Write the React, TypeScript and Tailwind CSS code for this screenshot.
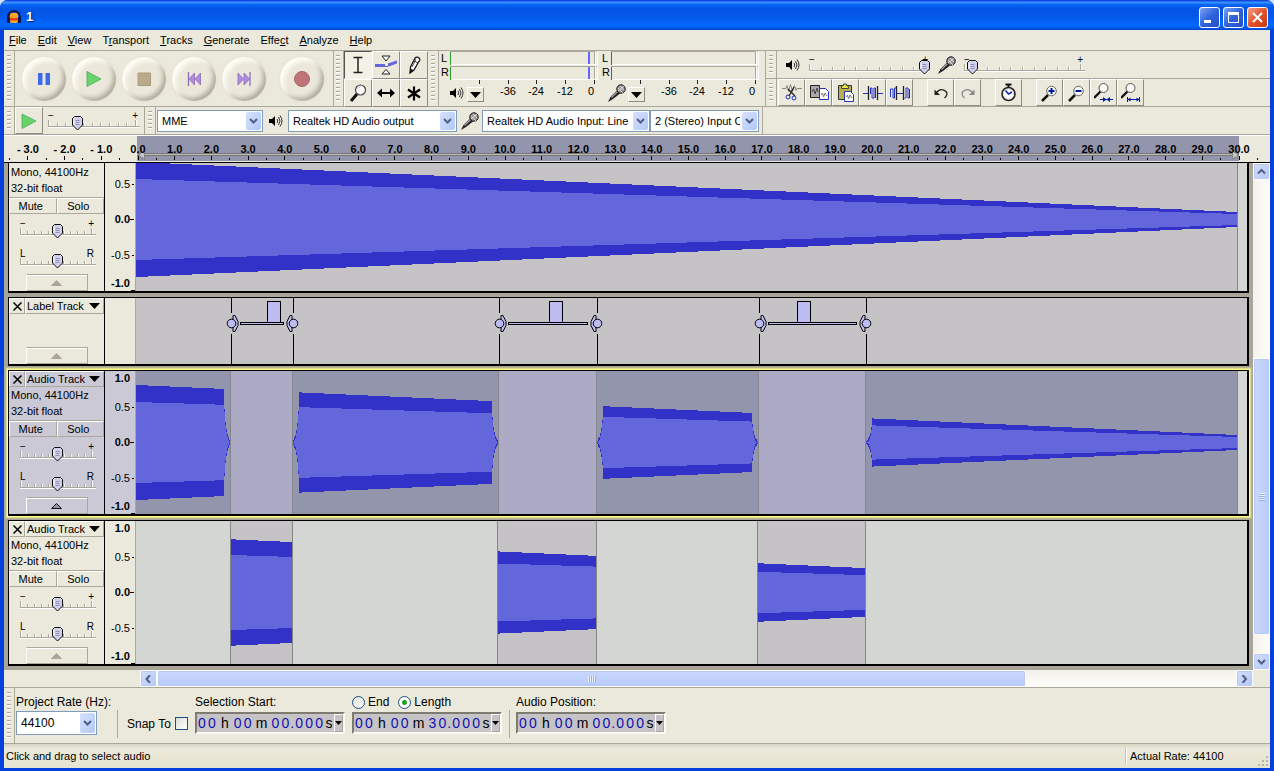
import { useState, type ReactNode } from 'react'

const MENUS = [
  ['', 'F', 'ile'],
  ['', 'E', 'dit'],
  ['', 'V', 'iew'],
  ['T', 'r', 'ansport'],
  ['', 'T', 'racks'],
  ['', 'G', 'enerate'],
  ['Effe', 'c', 't'],
  ['', 'A', 'nalyze'],
  ['', 'H', 'elp'],
]

// Timeline geometry: one second of audio is 36.7 units, the tracks are 1111 units wide
const SECOND = 36.7
const CLIP_END = 1101
const WAVE_W = 1111
const WAVE_H = 143
const MID = 71.5
const RULER_W = 1266

const FADE = [0.04, 0.1, 0.15, 0.24, 0.38, 0.62]

interface Clip {
  start: number
  end: number
  fadeIn?: boolean
  fadeOut?: boolean
}

const FULL: Clip[] = [{ start: 0, end: CLIP_END }]
const KEPT: Clip[] = [
  { start: 0, end: 94, fadeOut: true },
  { start: 157, end: 362, fadeIn: true, fadeOut: true },
  { start: 461, end: 622, fadeIn: true, fadeOut: true },
  { start: 730, end: CLIP_END, fadeIn: true },
]
const CUT: Clip[] = [
  { start: 95, end: 156 },
  { start: 362, end: 460 },
  { start: 622, end: 729 },
]

const LABELS = [
  { from: 95, to: 157, box: 131 },
  { from: 363, to: 461, box: 413 },
  { from: 623, to: 730, box: 661 },
]

function envelope(clip: Clip, peak: number, tail: number, inset: number) {
  const top: string[] = []
  const bottom: string[] = []
  for (let x = clip.start; x < clip.end; x++) {
    const loud = 57 - (50 * x) / CLIP_END
    let h = peak - ((peak - tail) * x) / CLIP_END
    const left = x - clip.start
    const right = clip.end - 1 - x
    if (clip.fadeIn && left < FADE.length) h = Math.min(h, loud * FADE[left] - inset)
    if (clip.fadeOut && right < FADE.length) h = Math.min(h, loud * FADE[right] - inset)
    h = Math.max(0, Math.round(h)) + 0.5
    top.push(`${x},${MID - h} ${x + 1},${MID - h}`)
    bottom.unshift(`${x + 1},${MID + h} ${x},${MID + h}`)
  }
  return [...top, ...bottom].join(' ')
}

function Wave({ clips }: { clips: Clip[] }) {
  return (
    <>
      {clips.map((c) => (
        <g key={c.start}>
          <polygon points={envelope(c, 57, 7, 0)} fill="#3232c8" />
          <polygon points={envelope(c, 40, 5, 3)} fill="#6467dc" />
        </g>
      ))}
    </>
  )
}

function Canvas({ height, children, bg }: { height: number; children: ReactNode; bg: string }) {
  return (
    <svg
      className={`block min-w-0 flex-1 ${bg}`}
      viewBox={`0 0 ${WAVE_W} ${height}`}
      height={height}
      preserveAspectRatio="none"
      shapeRendering="crispEdges"
    >
      {children}
    </svg>
  )
}

function Grip() {
  return (
    <div className="flex w-[11px] shrink-0 justify-center border-r border-[#aca899] py-1">
      <div className="w-1 bg-[repeating-linear-gradient(to_bottom,#aca899_0_1px,#fff_1px_2px,transparent_2px_4px)]" />
    </div>
  )
}

interface SliderProps {
  label: string
  width: number
  initial: number
  ticks: number
  low?: string
  high?: string
}

function Slider({ label, width, initial, ticks, low = '−', high = '+' }: SliderProps) {
  const [value, setValue] = useState(initial)
  const usable = width - 3
  return (
    <label className="relative block h-5" style={{ width }}>
      <svg width={width} height="20" className="block overflow-visible" shapeRendering="crispEdges">
        {Array.from({ length: ticks }, (_, i) => {
          const x = Math.round((i * (usable - 2)) / (ticks - 1))
          const end = i === 0 || i === ticks - 1
          return (
            <g key={i}>
              <rect x={x} y={end ? 9 : 12} width="1" height={end ? 6 : 3} fill="#aca899" />
              <rect x={x + 1} y={end ? 9 : 12} width="1" height={end ? 6 : 3} fill="#fff" />
            </g>
          )
        })}
        <rect x="0" y="15" width={width} height="1" fill="#aca899" />
        <rect x="0" y="16" width={width} height="1" fill="#fff" />
        <text x="0" y="8" className="text-[10px]">{low}</text>
        <text x={width - 2} y="8" textAnchor="end" className="text-[10px]">{high}</text>
        <g transform={`translate(${Math.round((value / 100) * width) - 5} 5)`} shapeRendering="auto">
          <path d="M2.500.5h6l2 2v6.500l-5 5-5-5V2.500z" fill="#d0d0ea" stroke="#111" />
          <path d="M2 3v5.500" stroke="#fff" />
          <path d="M3.500 4.500h4M3.500 6.500h4M3.500 8.500h4" stroke="#8f90b4" />
        </g>
      </svg>
      <input
        type="range"
        aria-label={label}
        value={value}
        onChange={(e) => setValue(Number(e.target.value))}
        className="absolute inset-0 h-full w-full cursor-default opacity-0"
      />
    </label>
  )
}

function Dropdown({ label, text, className }: { label: string; text: string; className: string }) {
  return (
    <div className={`relative border border-[#7f9db9] bg-white ${className}`}>
      <select
        aria-label={label}
        className="h-full w-full appearance-none overflow-hidden pr-[18px] pl-1 text-clip whitespace-nowrap outline-none"
      >
        <option>{text}</option>
      </select>
      <span className="pointer-events-none absolute inset-y-px right-px flex w-[15px] items-center justify-center rounded-xs bg-linear-to-br from-[#d5e0fd] to-[#b3c8f7]">
        <svg width="9" height="6" viewBox="0 0 9 6" fill="none" stroke="#4d6185" strokeWidth="2">
          <path d="M1 1l3.500 3.500L8 1" />
        </svg>
      </span>
    </div>
  )
}

function Speaker() {
  return (
    <svg width="15" height="14" viewBox="0 0 15 14" className="shrink-0">
      <path d="M1 5h3l3-3v10l-3-3H1z" fill="#000" />
      <path d="M9 5q1.500 2 0 4M10.500 3q3 4 0 8M12 1.500q4 5.500 0 11" fill="none" stroke="#333" />
    </svg>
  )
}

function Mic() {
  return (
    <svg width="20" height="20" viewBox="0 0 20 20" className="shrink-0">
      <path d="M1 19l2.500-5 6.500-6.500 3 3L6 16z" fill="#222" />
      <path d="M4.500 14.500l6-6" stroke="#aaa" strokeWidth="1.200" />
      <circle cx="14" cy="6" r="4.200" fill="#999" stroke="#111" />
      <path d="M11 5l5 5M13 3l4 4M11 8l6-5" stroke="#e4e4e4" strokeWidth=".8" />
    </svg>
  )
}

function RoundButton({ label, children, className = '' }: { label: string; children: ReactNode; className?: string }) {
  return (
    <button
      aria-label={label}
      className={`flex size-11 shrink-0 items-center justify-center rounded-full bg-[#ebe7da] shadow-[inset_4px_4px_4px_#fdfcf4,inset_-3px_-3px_4px_#b3ae9f,0_0_3px_#e0dccd] ${className}`}
    >
      <svg width="18" height="18" viewBox="0 0 18 18">{children}</svg>
    </button>
  )
}

function Transport() {
  return (
    <div className="flex w-[329px] shrink-0">
      <Grip />
      <div className="flex items-center gap-1.5 pl-[7px]">
        <RoundButton label="Pause">
          <path d="M3 3h4.500v12H3zM10.500 3H15v12h-4.500z" fill="#3c6cec" />
        </RoundButton>
        <RoundButton label="Play">
          <path d="M2 1.500v15L16 9z" fill="#68d468" stroke="#4aa860" strokeWidth=".8" />
        </RoundButton>
        <RoundButton label="Stop">
          <path d="M3 3h12.500v12.500H3z" fill="#b9aa88" stroke="#a99b80" />
        </RoundButton>
        <RoundButton label="Skip to Start">
          <path d="M3.500 2v14" stroke="#8d6cb8" strokeWidth="1.300" />
          <path d="M9.500 3v12L4 9zM15.500 3v12L10 9z" fill="#b48adf" stroke="#8d6cb8" strokeWidth=".8" />
        </RoundButton>
        <RoundButton label="Skip to End">
          <path d="M15 2v14" stroke="#8d6cb8" strokeWidth="1.300" />
          <path d="M9 3v12l5.500-6zM3 3v12l5.500-6z" fill="#b48adf" stroke="#8d6cb8" strokeWidth=".8" />
        </RoundButton>
        <RoundButton label="Record" className="ml-2">
          <circle cx="9" cy="9" r="7.500" fill="#bf7478" stroke="#a5686a" />
        </RoundButton>
      </div>
    </div>
  )
}

const TOOLS = [
  {
    name: 'Selection Tool',
    art: <path d="M6.500 3.500h9M11 3v16M6.500 18.500h9" fill="none" stroke="#222" strokeWidth="1.500" />,
  },
  {
    name: 'Envelope Tool',
    art: (
      <>
        <path d="M-1 11.500h13l10-3.500h2" fill="none" stroke="#6467dc" strokeWidth="3" />
        <path d="M7 2h8l-4 5zM7 20h8l-4-4.500z" fill="#fff" stroke="#222" />
        <circle cx="11.500" cy="10.500" r="1.500" fill="#fff" />
      </>
    ),
  },
  {
    name: 'Draw Tool',
    art: (
      <>
        <path d="M7 19l.500-6L12 4q2-2 4 0t-.5 4L11 16z" fill="#fff" stroke="#111" strokeWidth="1.200" />
        <path d="M7 19l1-4 2 1.500zM11 7l4 2M13 5l-4 8" fill="#111" stroke="#111" strokeWidth=".8" />
      </>
    ),
  },
  {
    name: 'Zoom Tool',
    art: (
      <>
        <path d="M4 19l6-7" stroke="#111" strokeWidth="3" />
        <circle cx="13.500" cy="8" r="5" fill="#fff" stroke="#444" strokeWidth="1.200" />
        <path d="M10.500 6.500l3-2" stroke="#bbb" />
      </>
    ),
  },
  {
    name: 'Time Shift Tool',
    art: <path d="M2 11l5-4.500V10h8V6.500l5 4.500-5 4.500V12H7v3.500z" fill="#000" />,
  },
  {
    name: 'Multi-Tool Mode',
    art: <path d="M11 4.500v14M5 7.500l12 8M17 7.500l-12 8" stroke="#000" strokeWidth="2.200" />,
  },
]

function ToolsBar() {
  return (
    <div className="flex shrink-0 border-l border-[#aca899]">
      <div className="-ml-px flex">
        <Grip />
      </div>
      <div className="grid grid-cols-3">
        {TOOLS.map((t, i) => (
          <button
            key={t.name}
            aria-label={t.name}
            className={`flex h-[28px] w-[28px] items-center justify-center border ${
              i === 0 ? 'border-[#f6f4ea] border-t-[#555] border-l-[#555] bg-[#f3f1e6]' : 'border-white border-r-[#8f8c80] border-b-[#8f8c80]'
            }`}
          >
            <svg width="22" height="22" viewBox="0 0 22 22">{t.art}</svg>
          </button>
        ))}
      </div>
    </div>
  )
}

function Meter({ label, color, peak, icon }: { label: string; color: string; peak?: boolean; icon: ReactNode }) {
  return (
    <div className="w-[161px]">
      <div className="flex h-[29px]">
        <div className="w-[9px] leading-[14px]">
          <div>L</div>
          <div>R</div>
        </div>
        <svg width="148" height="29" shapeRendering="crispEdges">
          {[0, 15].map((y) => (
            <g key={y}>
              <rect x="0" y={y} width="148" height="14" fill="#ebe9db" />
              <rect x="0" y={y} width="148" height="1" fill="#aca899" />
              <rect x="0" y={y + 13} width="148" height="1" fill="#fff" />
              <rect x="0" y={y + 1} width="1" height="13" fill={color} />
              {peak && <rect x="138" y={y + 1} width="2" height="12" fill="#6467ff" />}
              <rect x="144" y={y} width="1" height="13" fill="#aca899" />
              <rect x="145" y={y} width="1" height="14" fill="#fff" />
              <rect x="147" y={y} width="1" height="14" fill="#fff" />
            </g>
          ))}
        </svg>
      </div>
      <div className="flex h-[26px] items-end pl-1">
        <span className="flex w-[22px] justify-center self-center">{icon}</span>
        <button
          aria-label={`${label} menu`}
          className="mb-1 flex h-[15px] w-[17px] items-center justify-center border border-white border-r-[#8f8c80] border-b-[#8f8c80]"
        >
          <svg width="11" height="6"><path d="M0 0h11L5.500 6z" /></svg>
        </button>
        <svg width="117" height="26" className="overflow-visible text-[11px]">
          {[-5, 24, 52, 81, 110].map((x) => (
            <rect key={x} x={x} y="0" width="1" height="4" fill="#222" />
          ))}
          <text x="24" y="15" textAnchor="middle">-36</text>
          <text x="52" y="15" textAnchor="middle">-24</text>
          <text x="81" y="15" textAnchor="middle">-12</text>
          <text x="107" y="15" textAnchor="middle">0</text>
        </svg>
      </div>
    </div>
  )
}

function Lens({ children }: { children?: ReactNode }) {
  return (
    <>
      <path d="M2 18l6-6" stroke="#111" strokeWidth="2.500" />
      <circle cx="11.500" cy="8" r="4.800" fill="#f8f8f4" stroke="#666" />
      {children}
    </>
  )
}

function FitLens() {
  return (
    <>
      <path d="M0 15l7-7" stroke="#111" strokeWidth="2.300" />
      <circle cx="9.500" cy="5" r="4.500" fill="#f8f8f4" stroke="#555" />
    </>
  )
}

const EDIT_GROUPS: { name: string; art: ReactNode }[][] = [
  [
    {
      name: 'Cut',
      art: (
        <>
          <path d="M0 5.500h4l1-3 1.500 6 2-7 2 7 2-6 1.500 5 1-2h5" fill="none" stroke="#888" />
          <path d="M12 4l-5 9M6 6l7 7" stroke="#222" strokeWidth="1.300" />
          <circle cx="6" cy="14" r="2" fill="none" stroke="#2230c0" />
          <circle cx="12" cy="15" r="2" fill="none" stroke="#2230c0" />
        </>
      ),
    },
    {
      name: 'Copy',
      art: (
        <>
          <path d="M1.500 2.500h9v12h-9z" fill="#aaa" stroke="#222" />
          <path d="M3 9l1.500-3L6 11l2-6 1 4" fill="none" stroke="#444" />
          <path d="M10.500 5.500h6l3 3v8h-9z" fill="#fff" stroke="#2230c0" />
          <path d="M12 12l1.500-2 1 4 1.500-4 2 3" fill="none" stroke="#777" />
        </>
      ),
    },
    {
      name: 'Paste',
      art: (
        <>
          <path d="M2.500 2.500h13v14h-13z" fill="#b8b04c" stroke="#333" />
          <path d="M5.500 3.500l2-1V1h3v1.500l2 1v2h-7z" fill="#f0e640" stroke="#444" />
          <path d="M8.500 8.500h6l3 3v7h-9z" fill="#fff" stroke="#2230c0" />
          <path d="M10 14l1.500-2 1 4 1.500-4 2 3" fill="none" stroke="#777" />
        </>
      ),
    },
    {
      name: 'Trim',
      art: (
        <>
          <path d="M0 10.500h5M15 10.500h5" stroke="#2230c0" strokeWidth="1.200" />
          <path d="M5.500 3v14M14.500 3v14" stroke="#222" strokeWidth="1.300" />
          <path d="M7.500 11V5h1.500v10h2V5h1.500v10" fill="none" stroke="#2230c0" />
        </>
      ),
    },
    {
      name: 'Silence',
      art: (
        <>
          <path d="M.5 14V6H3v9h1.500V5H6M7 10.500h7M14.500 15h1.500V5h2v10h1.500V6" fill="none" stroke="#2230c0" />
          <path d="M6.500 3v14M13.500 3v14" stroke="#222" strokeWidth="1.300" />
        </>
      ),
    },
  ],
  [
    {
      name: 'Undo',
      art: (
        <>
          <path d="M5 10q5-6 10-1.500 2.500 3-1.500 6.500" fill="none" stroke="#222" strokeWidth="1.300" />
          <path d="M3.500 6.500v5.500H9z" fill="#222" />
        </>
      ),
    },
    {
      name: 'Redo',
      art: (
        <>
          <path d="M15 10q-5-6-10-1.500Q2.500 11.500 6.500 15" fill="none" stroke="#888" strokeWidth="1.300" />
          <path d="M16.500 6.500v5.500H11z" fill="#888" />
        </>
      ),
    },
  ],
  [
    {
      name: 'Sync-Lock Tracks',
      art: (
        <>
          <path d="M6.500 1.500h6M9.500 1.500V5" stroke="#111" strokeWidth="2" />
          <circle cx="9.500" cy="11" r="6.500" fill="#fff" stroke="#222" strokeWidth="1.600" />
          <circle cx="9.500" cy="11" r="5" fill="none" stroke="#999" strokeDasharray="1 2" />
          <path d="M6.500 7.500l3 3.500 3.500-2" fill="none" stroke="#1226b0" strokeWidth="1.600" />
        </>
      ),
    },
  ],
  [
    { name: 'Zoom In', art: <Lens><path d="M8.500 8h6M11.500 5v6" stroke="#001a9c" strokeWidth="2" /></Lens> },
    { name: 'Zoom Out', art: <Lens><path d="M8.500 8h6" stroke="#001a9c" strokeWidth="2" /></Lens> },
    {
      name: 'Fit Selection',
      art: (
        <>
          <FitLens />
          <path d="M6 16.500h13" stroke="#001a9c" />
          <path d="M9 14l3.500 2.500L9 19zM16 14l-3.500 2.500L16 19z" fill="#001a9c" />
        </>
      ),
    },
    {
      name: 'Fit Project',
      art: (
        <>
          <FitLens />
          <path d="M6.500 14v5M18.500 14v5M7 16.500h12" stroke="#001a9c" />
          <path d="M9.500 14.500v4l-3-2zM15.500 14.500v4l3-2z" fill="#001a9c" />
        </>
      ),
    },
  ],
]

function Toolbars() {
  return (
    <div className="border-t border-[#aca899]">
      <div className="flex h-[56px] border-b border-[#aca899]">
        <Transport />
        <ToolsBar />
        <div className="flex w-[338px] shrink-0 border-r border-[#aca899]">
          <Grip />
          <div className="flex pl-0.5">
            <Meter label="Playback" color="#2aa02a" peak icon={<Speaker />} />
            <Meter label="Recording" color="#a04040" icon={<Mic />} />
          </div>
        </div>
        <div className="min-w-0 flex-1">
          <div className="flex h-[28px] border-b border-[#aca899]">
            <Grip />
            <div className="flex items-center gap-[9px] pl-2">
              <Speaker />
              <Slider label="Output volume" width={121} initial={95} ticks={11} />
            </div>
            <div className="flex items-center gap-[7px] pl-[7px]">
              <Mic />
              <Slider label="Input volume" width={121} initial={7} ticks={11} />
            </div>
          </div>
          <div className="flex h-[27px]">
            <Grip />
            <div className="flex gap-3.5 pl-px">
              {EDIT_GROUPS.map((group) => (
                <div key={group[0].name} className="flex">
                  {group.map((b) => (
                    <button
                      key={b.name}
                      aria-label={b.name}
                      className="flex size-[27px] items-center justify-center border border-white border-r-[#8f8c80] border-b-[#8f8c80]"
                    >
                      <svg width="20" height="20" viewBox="0 0 20 20">{b.art}</svg>
                    </button>
                  ))}
                </div>
              ))}
            </div>
          </div>
        </div>
      </div>
      <div className="flex h-[28px] border-b border-[#aca899]">
        <Grip />
        <button
          aria-label="Play at Speed"
          className="flex w-[28px] items-center justify-center border border-white border-r-[#8f8c80] border-b-[#8f8c80]"
        >
          <svg width="16" height="16" viewBox="0 0 16 16">
            <path d="M1 1v14.500L15 8z" fill="#68d468" stroke="#4aa860" strokeWidth=".8" />
          </svg>
        </button>
        <div className="flex w-[102px] items-center border-r border-[#aca899] pl-[5px]">
          <Slider label="Playback speed" width={92} initial={32} ticks={11} />
        </div>
        <Grip />
        <div className="flex items-center border-r border-[#aca899] pr-[3px] pl-px">
          <Dropdown label="Audio host" text="MME" className="h-[22px] w-[106px]" />
          <span className="flex w-[25px] justify-center"><Speaker /></span>
          <Dropdown label="Output device" text="Realtek HD Audio output" className="h-[22px] w-[169px]" />
          <span className="flex w-[25px] justify-center"><Mic /></span>
          <Dropdown label="Input device" text="Realtek HD Audio Input: Line V" className="h-[22px] w-[168px]" />
          <Dropdown label="Input channels" text="2 (Stereo) Input C" className="h-[22px] w-[109px]" />
        </div>
      </div>
    </div>
  )
}

function TimeRuler() {
  const pct = (px: number) => `${(px / RULER_W) * 100}%`
  const at = (s: number) => 134 + s * SECOND
  const halves = Array.from({ length: 69 }, (_, i) => -3.5 + i / 2)
  return (
    <div className="border-t border-b border-t-white border-b-black">
      <svg className="block h-[26px] w-full" shapeRendering="crispEdges">
        <rect x={pct(133)} width={pct(1102)} height="25" fill="#9295ab" />
        <rect x={pct(133)} y="17" width={pct(1102)} height="1" fill="#777" />
        <rect x={pct(133)} y="18" width={pct(1102)} height="1" fill="#bbb" />
        <rect x={pct(133)} y="19" width={pct(1102)} height="1" fill="#777" />
        <svg x={pct(134)} y="14" width="8" height="11">
          <path d="M6.500.5v9L.5 5z" fill="#c5c3c6" stroke="#888" />
        </svg>
        <svg x={pct(1228)} y="14" width="8" height="11">
          <path d="M.5.5v9l6-4.500z" fill="#c5c3c6" stroke="#888" />
        </svg>
        {halves.map((s) => {
          const major = Number.isInteger(s)
          return <rect key={s} x={pct(Math.floor(at(s)))} y={major ? 20 : 22} width="1" height={major ? 4 : 2} />
        })}
        {halves.filter((s) => Number.isInteger(s) && s <= 30).map((s) => (
          <text key={s} x={pct(at(s))} y="17" textAnchor="middle" className="text-[11px] font-bold">
            {s < 0 ? `- ${-s}.0` : `${s}.0`}
          </text>
        ))}
      </svg>
    </div>
  )
}

function Amplitude({ cut }: { cut?: boolean }) {
  const rows = [
    { y: 11, text: '1.0', bold: true },
    { y: 40, text: '0.5', tick: true },
    { y: 75, text: '0.0', bold: true, tick: true },
    { y: 111, text: '-0.5', tick: true },
    { y: 139, text: '-1.0', bold: true },
  ]
  return (
    <svg width="30" height={WAVE_H} className="block">
      {rows.slice(cut ? 1 : 0).map((r) => (
        <g key={r.text}>
          <text x="25" y={r.y} textAnchor="end" className={r.bold ? 'text-[11px] font-bold' : 'text-[11px]'}>
            {r.text}
          </text>
          {r.tick && <rect x={r.bold ? 25 : 27} y={r.y - 4} width={r.bold ? 4 : 2} height="1" />}
        </g>
      ))}
      <rect x="26" y="142" width="4" height="1" />
    </svg>
  )
}

interface TrackProps {
  name: string
  audio?: boolean
  selected?: boolean
  cut?: boolean
  className?: string
  children: ReactNode
}

function Track({ name, audio, selected, cut, className = '', children }: TrackProps) {
  const face = selected ? 'bg-[#cbc9d6]' : 'bg-[#ebe9db]'
  const edge = 'border-white border-r-[#aca899] border-b-[#aca899]'
  return (
    <section
      className={`flex shrink-0 border-t border-r-2 border-b-2 border-l border-black ${className} ${
        selected ? 'shadow-[0_0_0_1px_#ffff80,0_0_0_2px_#dedb92,0_0_0_3px_#b9b592]' : ''
      }`}
    >
      <div className={`flex w-24 shrink-0 flex-col border-r border-black text-[11px] ${face}`}>
        {cut ? (
          <div className="h-4" />
        ) : (
          <div className="flex h-4">
            <button aria-label={`Close ${name}`} className={`flex w-4 items-center justify-center border ${edge}`}>
              <svg width="9" height="9" stroke="#000" strokeWidth="1.500"><path d="M.5.5l8 8M8.500.5l-8 8" /></svg>
            </button>
            <button className={`flex flex-1 items-center justify-between border pr-[3px] pl-px whitespace-nowrap ${edge}`}>
              {name}
              <svg width="11" height="6"><path d="M0 0h11L5.500 6z" /></svg>
            </button>
          </div>
        )}
        {audio ? (
          <>
            <div className="h-[33px] pl-0.5 leading-4">
              <p>Mono, 44100Hz</p>
              <p>32-bit float</p>
            </div>
            <div className="flex h-[17px] border-t border-[#aca899]">
              <button className={`flex-1 border pr-1 pb-px leading-3 ${edge}`}>Mute</button>
              <button className={`flex-1 border pr-1 pb-px leading-3 ${edge}`}>Solo</button>
            </div>
            <div className="h-[30px] pt-[5px] pl-[11px]">
              <Slider label="Gain" width={76} initial={49} ticks={11} />
            </div>
            <div className="h-[30px] pt-[5px] pl-[11px]">
              <Slider label="Pan" width={76} initial={49} ticks={11} low="L" high="R" />
            </div>
          </>
        ) : (
          <div className="h-[33px]" />
        )}
        <button
          aria-label={`Collapse ${name}`}
          className="mx-auto flex h-[17px] w-[62px] items-center justify-center border border-[#aca899] border-l-white shadow-[inset_0_1px_#fff]"
        >
          <svg width="11" height="6">
            <path d="M.5 5.500h10L5.500.5z" fill={selected ? '#9295ab' : '#aca899'} stroke={selected ? '#111' : '#aca899'} />
          </svg>
        </button>
      </div>
      <div className={`w-[31px] shrink-0 border-r border-[#aca899] ${face}`}>{audio && <Amplitude cut={cut} />}</div>
      {children}
    </section>
  )
}

function LabelMarks() {
  return (
    <Canvas height={66} bg="bg-[#c5c3c6]">
      {LABELS.map((l) => (
        <g key={l.from}>
          {[l.from, l.to].map((x, i) => (
            <g key={x}>
              <path d={`M${x + 0.5} 0v15M${x + 0.5} 36v30`} stroke="#000" />
              <g shapeRendering="auto" fill="#bcbcf0" stroke="#000">
                <path
                  d="M1.500-8h2l3 6v4l-3 6h-2z"
                  transform={`translate(${x + 0.5} 25.5) scale(${i === 0 ? 1 : -1} 1)`}
                />
                <circle cx={x + 0.5} cy="25.500" r="4.300" />
              </g>
            </g>
          ))}
          <rect x={l.box + 0.5} y="3.500" width="13" height="21" fill="#bcbcf0" stroke="#000" />
          <rect x={l.from + 9.5} y="24.500" width={l.to - l.from - 19} height="2" fill="#bcbcf0" stroke="#000" />
        </g>
      ))}
    </Canvas>
  )
}

const ARROWS = {
  up: 'M1 5.500L4.500 2 8 5.500',
  down: 'M1 2l3.500 3.500L8 2',
  left: 'M6 0L2.500 4 6 8',
  right: 'M2.500 0L6 4 2.500 8',
}

function ScrollButton({ dir }: { dir: keyof typeof ARROWS }) {
  return (
    <button
      aria-label={`Scroll ${dir}`}
      className="flex size-[17px] shrink-0 items-center justify-center rounded-xs border border-white bg-linear-to-br from-[#d3defc] to-[#b4c8f6] shadow-[inset_0_0_0_1px_#b8c9f2]"
    >
      <svg width="9" height="8" viewBox="0 0 9 8" fill="none" stroke="#4d6185" strokeWidth="2">
        <path d={ARROWS[dir]} />
      </svg>
    </button>
  )
}

function TrackArea() {
  return (
    <div className="flex min-h-0 flex-1">
      <div className="min-w-0 flex-1 overflow-hidden bg-[#a9a699] px-1">
        {/* scrolled down by one line, so the first header is cut off */}
        <div className="-mt-4 flex flex-col gap-1">
          <Track name="Audio Track" audio cut>
            <Canvas height={WAVE_H} bg="bg-[#d4d6d3]">
              <rect width={CLIP_END} height={WAVE_H} fill="#c5c3c6" />
              <rect x={CLIP_END} width="1" height={WAVE_H} fill="#858585" />
              <Wave clips={FULL} />
            </Canvas>
          </Track>
          <Track name="Label Track">
            <LabelMarks />
          </Track>
          <Track name="Audio Track" audio selected className="relative">
            <Canvas height={WAVE_H} bg="bg-[#d4d6d3]">
              <rect width={CLIP_END + 1} height={WAVE_H} fill="#9295ab" />
              {CUT.map((c) => (
                <rect key={c.start} x={c.start} width={c.end - c.start} height={WAVE_H} fill="#adaac6" />
              ))}
              {[94, 156, 362, 460, 622, 729, 1101].map((x) => (
                <rect key={x} x={x} width="1" height={WAVE_H} fill="#85858c" />
              ))}
              <Wave clips={KEPT} />
            </Canvas>
          </Track>
          <Track name="Audio Track" audio>
            <Canvas height={WAVE_H} bg="bg-[#d4d6d3]">
              {CUT.map((c) => (
                <rect key={c.start} x={c.start} width={c.end - c.start} height={WAVE_H} fill="#c5c3c6" />
              ))}
              <Wave clips={CUT} />
              {[94, 156, 361, 460, 621, 729].map((x) => (
                <rect key={x} x={x} width="1" height={WAVE_H} fill="#858585" />
              ))}
            </Canvas>
          </Track>
        </div>
      </div>
      <div className="flex w-[17px] shrink-0 flex-col bg-linear-to-r from-[#f3f1ec] to-[#fefefb]">
        <ScrollButton dir="up" />
        <div className="flex-[179]" />
        <div className="flex flex-[276] flex-col items-center justify-center rounded-xs border border-white bg-linear-to-r from-[#cad8fd] to-[#b8cbf8] shadow-[inset_0_0_0_1px_#b8c9f2]">
          <div className="h-2 w-1.5 bg-[repeating-linear-gradient(to_bottom,#eef4fe_0_1px,#8cb0f8_1px_2px)]" />
        </div>
        <div className="flex-[18]" />
        <ScrollButton dir="down" />
      </div>
    </div>
  )
}

function TimeField({ label, digits }: { label: string; digits: string }) {
  const cell = (i: number) => (
    <input
      key={i}
      aria-label={`${label} digit ${i + 1}`}
      maxLength={1}
      defaultValue={digits[i]}
      className="w-2.5 bg-transparent p-0 text-center text-[#1010b4] outline-none"
    />
  )
  return (
    <div
      role="group"
      aria-label={label}
      className="flex h-[22px] w-[150px] items-center border-2 border-[#fbfaf4] border-t-[#7e7c70] border-l-[#7e7c70] bg-[#c5c3c6] text-sm leading-4"
    >
      {cell(0)}
      {cell(1)}
      <span className="w-4 text-center">h</span>
      {cell(2)}
      {cell(3)}
      <span className="w-[18px] text-center">m</span>
      {cell(4)}
      {cell(5)}
      <span className="w-1 text-center text-[#1010b4]">.</span>
      {cell(6)}
      {cell(7)}
      {cell(8)}
      <span className="w-2.5 text-center">s</span>
      <button
        aria-label={`${label} format`}
        className="flex flex-1 items-center justify-center self-stretch border border-white border-r-[#aca899] border-b-[#aca899]"
      >
        <svg width="7" height="4"><path d="M0 0h7L3.500 4z" /></svg>
      </button>
    </div>
  )
}

function SelectionBar() {
  const [mode, setMode] = useState('Length')
  return (
    <div className="flex h-[57px] border-t border-b border-[#aca899] text-xs">
      <Grip />
      <div className="w-[102px] pt-1.5 pl-px">
        <div className="h-[17px] whitespace-nowrap">Project Rate (Hz):</div>
        <Dropdown label="Project Rate (Hz)" text="44100" className="h-[24px] w-[81px]" />
      </div>
      <div className="mt-[22px] h-7 w-px bg-[#aca899]" />
      <label className="flex w-[77px] items-center gap-1 pt-4 pl-[9px] whitespace-nowrap">
        Snap To
        <input
          type="checkbox"
          className="size-[13px] appearance-none border border-[#1c5180] bg-linear-to-br from-[#dcdcd7] to-white checked:bg-[#21a121]"
        />
      </label>
      <div className="w-[157px] pt-1.5">
        <div className="h-[18px]">Selection Start:</div>
        <TimeField label="Selection Start" digits="000000000" />
      </div>
      <div className="w-[157px] pt-1.5">
        <div className="flex h-[18px] items-start gap-[9px]">
          {['End', 'Length'].map((m) => (
            <label key={m} className="flex items-center gap-[3px]">
              <input
                type="radio"
                name="mode"
                checked={mode === m}
                onChange={() => setMode(m)}
                className="size-[13px] appearance-none rounded-full border border-[#1c5180] bg-linear-to-br from-[#dcdcd7] to-white checked:bg-[radial-gradient(circle,#21a121_0_2px,#fff_3px)]"
              />
              {m}
            </label>
          ))}
        </div>
        <TimeField label="Selection Length" digits="000030000" />
      </div>
      <div className="mt-[22px] mr-1.5 h-7 w-px bg-[#aca899]" />
      <div className="pt-1.5">
        <div className="h-[18px]">Audio Position:</div>
        <TimeField label="Audio Position" digits="000000000" />
      </div>
    </div>
  )
}

function TitleBar() {
  const box =
    'flex size-[21px] items-center justify-center rounded-[3px] border border-white bg-linear-to-br'
  return (
    <header className="flex h-[30px] items-center bg-[linear-gradient(to_bottom,#0831d9_0,#3a93ff_8%,#0663f5_16%,#0455e5_30%,#0458ea_55%,#0368fe_85%,#0353e0_96%,#0540c8_100%)] px-1.5">
      <svg width="16" height="16" viewBox="0 0 16 16" className="mt-1">
        <path d="M2 10V8a6 6 0 0112 0v2" fill="none" stroke="#12124a" strokeWidth="2" />
        <rect x="4" y="4" width="8" height="10" rx="2" fill="#f5a71c" />
        <path d="M4 9.500l2-1 2 1 2-1 2 1v2H4z" fill="#e8401c" />
        <rect x="1" y="8" width="3" height="6" rx="1" fill="#12124a" />
        <rect x="12" y="8" width="3" height="6" rx="1" fill="#12124a" />
      </svg>
      <h1 className="mt-1 ml-1 flex-1 text-[13px] leading-4 font-bold text-white text-shadow-[1px_1px_1px_#0a1a70]">1</h1>
      <div className="mt-1 flex gap-[3px]">
        <button aria-label="Minimize" className={`${box} from-[#7da2f5] via-[#2f62de] to-[#2450c8]`}>
          <svg width="13" height="13"><rect x="1" y="9" width="7" height="3" fill="#fff" /></svg>
        </button>
        <button aria-label="Maximize" className={`${box} from-[#7da2f5] via-[#2f62de] to-[#2450c8]`}>
          <svg width="13" height="13">
            <path d="M1.500 2v9.500h10V2" fill="none" stroke="#fff" />
            <rect x="1" y="1" width="11" height="3" fill="#fff" />
          </svg>
        </button>
        <button aria-label="Close" className={`${box} from-[#f0a088] via-[#e0522c] to-[#c83808]`}>
          <svg width="13" height="13"><path d="M2 2l9 9M11 2l-9 9" stroke="#fff" strokeWidth="2" /></svg>
        </button>
      </div>
    </header>
  )
}

export default function App() {
  return (
    <div className="h-screen overflow-hidden bg-[#d6dff5]">
      <div className="flex h-full flex-col overflow-hidden rounded-t-lg bg-[#0640dc] font-['Liberation_Sans',Arial,sans-serif] text-[11px] leading-[14px] text-black">
        <TitleBar />
        <div className="mx-1 mb-[3px] flex min-h-0 flex-1 flex-col bg-[#ebe9db]">
          <nav className="flex h-5 items-center gap-[11px] pl-[5px]">
            {MENUS.map(([before, key, after]) => (
              <button key={key + after}>
                {before}
                <span className="underline">{key}</span>
                {after}
              </button>
            ))}
          </nav>
          <Toolbars />
          <TimeRuler />
          <TrackArea />
          <div className="flex h-[17px] bg-[#ebe9db] pr-[17px] pl-[136px]">
            <ScrollButton dir="left" />
            <div className="flex flex-[869] items-center justify-center rounded-xs border border-white bg-linear-to-b from-[#cad8fd] to-[#b8cbf8] shadow-[inset_0_0_0_1px_#b8c9f2]">
              <div className="h-1.5 w-2 bg-[repeating-linear-gradient(to_right,#eef4fe_0_1px,#8cb0f8_1px_2px)]" />
            </div>
            <div className="flex-[210] bg-linear-to-b from-[#f3f1ec] to-[#fefefb]" />
            <ScrollButton dir="right" />
          </div>
          <SelectionBar />
          <footer className="flex h-6 items-center bg-linear-to-b from-[#d8d5c4] via-[#ebe9db] via-20% to-[#e6e3d0] pl-0.5">
            <span className="flex-1">Click and drag to select audio</span>
            <span className="w-[133px] border-l border-[#c5c2b2] py-0.5 pl-1 shadow-[inset_1px_0_#fff]">
              Actual Rate: 44100
            </span>
            <svg width="12" height="12" className="self-end" fill="#b8b4a3">
              <path d="M8 0h2v2H8zM4 4h2v2H4zM8 4h2v2H8zM0 8h2v2H0zM4 8h2v2H4zM8 8h2v2H8z" />
            </svg>
          </footer>
        </div>
      </div>
    </div>
  )
}
